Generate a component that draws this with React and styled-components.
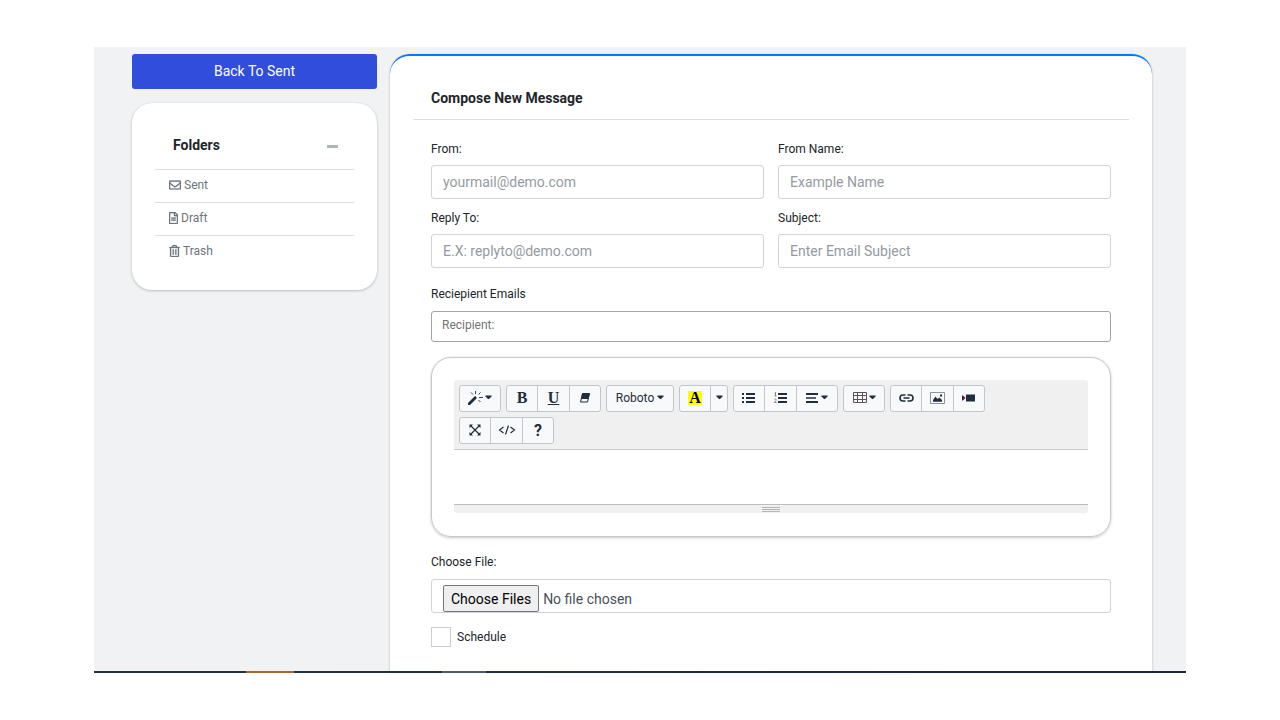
import React from 'react';
import styled, { createGlobalStyle, css } from 'styled-components';
import { FaRegEnvelope, FaRegFileAlt, FaRegTrashAlt } from 'react-icons/fa';

const GlobalStyle = createGlobalStyle`
  *, *::before, *::after {
    box-sizing: border-box;
  }
  body {
    margin: 0;
    background: #fff;
    color: #212529;
    font-family: Roboto, "Liberation Sans", sans-serif;
    font-size: 12px;
    line-height: 18px;
  }
  button, input {
    font-family: inherit;
    margin: 0;
  }
`;

/**
 * Page layout
 */
const Page = styled.div`
  min-height: 100vh;
  padding: 47px 94px;
  display: flex;
`;

const Shell = styled.div`
  flex: 1;
  min-width: 0;
  display: flex;
  flex-direction: column;
  background: #f1f2f4;
`;

const Columns = styled.div`
  flex: 1;
  display: grid;
  grid-template-columns: 245px minmax(0, 1fr);
  gap: 13px;
  padding: 7px 34px 0 38px;
`;

const BottomBar = styled.footer`
  height: 2px;
  background:
    linear-gradient(#a8652f, #a8652f) 152px 0 / 48px 2px no-repeat,
    linear-gradient(#4d5c68, #4d5c68) 348px 0 / 44px 2px no-repeat,
    linear-gradient(90deg, #20353f, #1e2642);
`;

/**
 * Sidebar
 */
const Sidebar = styled.aside`
  display: flex;
  flex-direction: column;
  gap: 14px;
`;

const BackButton = styled.button`
  height: 35px;
  padding: 0 0 2px;
  border: 0;
  border-radius: 3px;
  background: #304ddb;
  color: #fff;
  font-size: 14px;
  cursor: pointer;
`;

const cardShadow = css`
  box-shadow: 0 0 1px rgba(0, 0, 0, .125), 0 1px 3px rgba(0, 0, 0, .2);
`;

const FolderCard = styled.section`
  padding: 23px 23px 22px;
  border-radius: 20px;
  background: #fff;
  ${cardShadow}
`;

const CardHeader = styled.header`
  display: flex;
  align-items: center;
  justify-content: space-between;
  padding: 9px 16px ${props => (props.$tight ? 11 : 14)}px 18px;
  border-bottom: 1px solid #dcdee0;
`;

const CardTitle = styled.h3`
  margin: 0;
  font-size: 14px;
  line-height: 20px;
  font-weight: 700;
`;

const CollapseButton = styled.button`
  display: flex;
  padding: 0;
  border: 0;
  background: none;
  color: #b0b6bf;
  cursor: pointer;
`;

const FolderList = styled.ul`
  margin: 0;
  padding: 0;
  list-style: none;
`;

const FolderItem = styled.li`
  padding: 6px 14px 8px;

  & + & {
    border-top: 1px solid #dcdee0;
  }
`;

const FolderLink = styled.a`
  display: flex;
  align-items: center;
  gap: 3px;
  color: #6c757d;
  text-decoration: none;

  svg {
    width: ${props => props.$iconWidth}px;
    height: 12px;
    stroke: currentColor;
    stroke-width: 10px;
  }
`;

/**
 * Compose form
 */
const ComposeCard = styled.main`
  padding: 23px 23px 24px;
  border-top: 2px solid #007bff;
  border-radius: 20px 20px 0 0;
  background: #fff;
  ${cardShadow}
`;

const Form = styled.form`
  padding: 20px 18px 0;
`;

const FieldGrid = styled.div`
  display: grid;
  grid-template-columns: repeat(2, minmax(0, 1fr));
  gap: 10px 14px;
  margin-bottom: 17px;
`;

const Field = styled.div`
  display: flex;
  flex-direction: column;
  gap: 7px;
`;

const WideField = styled(Field)`
  gap: 8px;
  margin-bottom: ${props => props.$space}px;
`;

const TextInput = styled.input`
  width: 100%;
  height: 34px;
  padding: 0 11px;
  border: 1px solid #ced4da;
  border-radius: 3px;
  background: #fff;
  color: #495057;
  font-size: 14px;

  &::placeholder {
    color: #939ba2;
    opacity: 1;
  }
`;

const RecipientInput = styled(TextInput)`
  height: 31px;
  padding: 0 10px 4px;
  border-color: #a3a3a3;
  font-size: 12px;

  &::placeholder {
    color: #757575;
  }
`;

const FileInput = styled(TextInput)`
  padding: 5px 11px;

  &::file-selector-button {
    height: 27px;
    padding: 0 7px;
    border: 1px solid #767676;
    border-radius: 2px;
    background: #efefef;
    color: #000;
    font-family: inherit;
    font-size: 14px;
  }
`;

const CheckLabel = styled.label`
  display: flex;
  align-items: center;
  gap: 6px;
`;

const Checkbox = styled.input`
  appearance: none;
  width: 20px;
  height: 20px;
  border: 1px solid #d1ccc8;
  background: #fff;

  &:checked {
    background: #304ddb;
  }
`;

/**
 * Rich text editor
 */
const EditorCard = styled.section`
  margin-bottom: 16px;
  padding: 22px 22px 23px;
  border: 1px solid #c8c8c8;
  border-radius: 20px;
  ${cardShadow}
`;

const Toolbar = styled.div`
  display: flex;
  flex-wrap: wrap;
  gap: 5px;
  padding: 5px;
  border-bottom: 1px solid #c8cacc;
  border-radius: 3px 3px 0 0;
  background: #f0f0f0;
`;

const ToolGroup = styled.div`
  display: flex;
`;

const toolWidths = { icon: '32px', menu: '42px', caret: '18px', font: '68px' };

const ToolButton = styled.button`
  display: flex;
  align-items: center;
  justify-content: center;
  gap: 1px;
  width: ${props => toolWidths[props.$kind || 'icon']};
  height: 27px;
  padding: 0 0 1px;
  border: 1px solid #c3c6c9;
  background: #f8f9fa;
  color: #1f2d3d;
  font-size: 12px;
  cursor: pointer;

  &:first-child {
    border-radius: 3px 0 0 3px;
  }
  &:last-child {
    border-radius: 0 3px 3px 0;
  }
  &:only-child {
    border-radius: 3px;
  }
  &:not(:first-child) {
    margin-left: -1px;
  }
  &:not(:first-child):not(:last-child) {
    width: 33px;
  }
`;

const FontName = styled.span`
  margin-right: 2px;
`;

const Letter = styled.span`
  font-family: "Liberation Serif", serif;
  font-size: 16px;
  line-height: 14px;
  font-weight: 700;
  text-decoration: ${props => (props.$underline ? 'underline' : 'none')};
`;

const ColorLetter = styled(Letter)`
  padding: 0 1px;
  background: #ff0;
  color: #000;
`;

const HelpMark = styled.span`
  font-size: 16px;
  font-weight: 700;
`;

const EditArea = styled.div`
  height: 54px;
  padding: 10px;
  outline: 0;
`;

const ResizeBar = styled.div`
  display: flex;
  flex-direction: column;
  align-items: center;
  gap: 1px;
  height: 9px;
  padding-top: 2px;
  border-top: 1px solid #bbbdbf;
  border-radius: 0 0 3px 3px;
  background: #f0f0f0;
`;

const Grip = styled.span`
  width: 18px;
  height: 1px;
  background: #b5b5b5;
`;

/**
 * Toolbar drawings
 */
const Icon = ({ w = 14, h = 14, children }) => (
  <svg width={w} height={h} viewBox={`0 0 ${w} ${h}`} fill="currentColor" aria-hidden="true">
    {children}
  </svg>
);

const Caret = () => (
  <Icon w={7} h={8}>
    <path d="M.5 1.500h6v1L4 5H3L.5 2.500z" />
  </Icon>
);

const MagicIcon = () => (
  <Icon w={16}>
    <path d="M0 12 7 5l2 2-7 7H0z" />
    <path d="M7.500 0v3M3 1.500l2 2M12.500 1.500l-2 2M11 6.500h4M10.500 9l2 2" stroke="currentColor" strokeWidth=".9" fill="none" />
  </Icon>
);

const EraserIcon = () => (
  <Icon w={12} h={12}>
    <path d="M3.500 1.500h7L8.500 10h-7z" fill="#f8f9fa" stroke="currentColor" />
    <path d="M3.300 1.200h7.500L9.400 7H1.900z" />
  </Icon>
);

const ListIcon = () => (
  <Icon>
    <path d="M0 2h2v2H0zM0 6h2v2H0zM0 10h2v2H0zM4 2h9v2H4zM4 6h9v2H4zM4 10h9v2H4z" />
  </Icon>
);

const OrderedIcon = () => (
  <Icon>
    <path d="M4 2h9v2H4zM4 6h9v2H4zM4 10h9v2H4z" />
    <path d="M.5 2 1.500 1.300V5M.5 5h2M.4 8.400Q1.500 7.400 2.200 8.400 2.400 9.400.4 11.500h2.200" fill="none" stroke="#77685f" strokeWidth=".8" />
  </Icon>
);

const AlignIcon = () => (
  <Icon w={14}>
    <path d="M0 2h12v2H0zM0 10h12v2H0z" />
    <path d="M0 6h10v2H0z" opacity=".75" />
  </Icon>
);

const TableIcon = () => (
  <Icon w={15}>
    <path d="M.5 1.500h13v10H.5zM.5 4.500h13M.5 8.500h13M4.500 1.500v10M9.500 1.500v10" fill="none" stroke="#5d5152" />
  </Icon>
);

const LinkIcon = () => (
  <Icon w={15}>
    <path d="M6.500 4H4a3 3 0 0 0 0 6h2.500M8.500 4H11a3 3 0 0 1 0 6H8.500M4.500 7h6" fill="none" stroke="currentColor" strokeWidth="1.6" />
  </Icon>
);

const PictureIcon = () => (
  <Icon w={15}>
    <path d="M.5 1.500h14v11H.5z" fill="none" stroke="#8b929d" />
    <path d="M3 10.800V9l2.500-3.500 2 2.500 2-1.500L12 9v1.800zM10 3.500h2v2h-2z" />
  </Icon>
);

const VideoIcon = () => (
  <Icon>
    <path d="M4 3.500h9v7H4z" />
    <path d="M0 4.500h1L3.500 7 1 9.500H0z" fill="#531f32" />
  </Icon>
);

const ExpandIcon = () => (
  <Icon w={12} h={12}>
    <path d="m1.500 1.500 9 9M10.500 1.500l-9 9" stroke="currentColor" strokeWidth="1.2" />
    <path d="M.5 4V.5H4zM8 .5h3.500V4zM11.500 8v3.500H8zM4 11.500H.5V8z" />
  </Icon>
);

const CodeIcon = () => (
  <Icon w={18}>
    <path d="M5.500 4 1.500 7l4 3M12.500 4l4 3-4 3M10.500 2.500l-3 9" fill="none" stroke="currentColor" strokeWidth="1.2" />
  </Icon>
);

const MinusIcon = () => (
  <Icon w={11}>
    <path d="M0 7h11v3H0z" />
  </Icon>
);

const folders = [
  { name: 'Sent', icon: FaRegEnvelope, iconWidth: 12 },
  { name: 'Draft', icon: FaRegFileAlt, iconWidth: 9 },
  { name: 'Trash', icon: FaRegTrashAlt, iconWidth: 11 },
];

const fields = [
  { id: 'from', label: 'From:', placeholder: 'yourmail@demo.com' },
  { id: 'fromName', label: 'From Name:', placeholder: 'Example Name' },
  { id: 'replyTo', label: 'Reply To:', placeholder: 'E.X: replyto@demo.com' },
  { id: 'subject', label: 'Subject:', placeholder: 'Enter Email Subject' },
];

const tools = [
  [{ label: 'Style', kind: 'menu', content: <><MagicIcon /><Caret /></> }],
  [
    { label: 'Bold', content: <Letter>B</Letter> },
    { label: 'Underline', content: <Letter $underline>U</Letter> },
    { label: 'Remove Font Style', content: <EraserIcon /> },
  ],
  [{ label: 'Font Family', kind: 'font', content: <><FontName>Roboto</FontName><Caret /></> }],
  [
    { label: 'Recent Color', content: <ColorLetter>A</ColorLetter> },
    { label: 'More Color', kind: 'caret', content: <Caret /> },
  ],
  [
    { label: 'Unordered list', content: <ListIcon /> },
    { label: 'Ordered list', content: <OrderedIcon /> },
    { label: 'Paragraph', kind: 'menu', content: <><AlignIcon /><Caret /></> },
  ],
  [{ label: 'Table', kind: 'menu', content: <><TableIcon /><Caret /></> }],
  [
    { label: 'Link', content: <LinkIcon /> },
    { label: 'Picture', content: <PictureIcon /> },
    { label: 'Video', content: <VideoIcon /> },
  ],
  [
    { label: 'Full Screen', content: <ExpandIcon /> },
    { label: 'Code View', content: <CodeIcon /> },
    { label: 'Help', content: <HelpMark>?</HelpMark> },
  ],
];

const Editor = () => (
  <EditorCard>
    <Toolbar role="toolbar">
      {tools.map(group => (
        <ToolGroup key={group[0].label}>
          {group.map(tool => (
            <ToolButton key={tool.label} type="button" aria-label={tool.label} $kind={tool.kind}>
              {tool.content}
            </ToolButton>
          ))}
        </ToolGroup>
      ))}
    </Toolbar>
    <EditArea contentEditable suppressContentEditableWarning role="textbox" aria-label="Message" />
    <ResizeBar>
      <Grip />
      <Grip />
      <Grip />
    </ResizeBar>
  </EditorCard>
);

const Folders = () => (
  <Sidebar>
    <BackButton type="button">Back To Sent</BackButton>
    <FolderCard>
      <CardHeader>
        <CardTitle>Folders</CardTitle>
        <CollapseButton type="button" aria-label="Collapse">
          <MinusIcon />
        </CollapseButton>
      </CardHeader>
      <FolderList>
        {folders.map(({ name, icon: FolderIcon, iconWidth }) => (
          <FolderItem key={name}>
            <FolderLink href="#" $iconWidth={iconWidth}>
              <FolderIcon />
              {name}
            </FolderLink>
          </FolderItem>
        ))}
      </FolderList>
    </FolderCard>
  </Sidebar>
);

const Compose = () => (
  <ComposeCard>
    <CardHeader $tight>
      <CardTitle>Compose New Message</CardTitle>
    </CardHeader>
    <Form>
      <FieldGrid>
        {fields.map(field => (
          <Field key={field.id}>
            <label htmlFor={field.id}>{field.label}</label>
            <TextInput id={field.id} type="text" placeholder={field.placeholder} />
          </Field>
        ))}
      </FieldGrid>
      <WideField $space={15}>
        <label htmlFor="recipients">Reciepient Emails</label>
        <RecipientInput id="recipients" type="text" placeholder="Recipient:" />
      </WideField>
      <Editor />
      <WideField $space={14}>
        <label htmlFor="files">Choose File:</label>
        <FileInput id="files" type="file" multiple />
      </WideField>
      <CheckLabel>
        <Checkbox type="checkbox" />
        Schedule
      </CheckLabel>
    </Form>
  </ComposeCard>
);

const App = () => (
  <Page>
    <GlobalStyle />
    <Shell>
      <Columns>
        <Folders />
        <Compose />
      </Columns>
      <BottomBar />
    </Shell>
  </Page>
);

export default App;
